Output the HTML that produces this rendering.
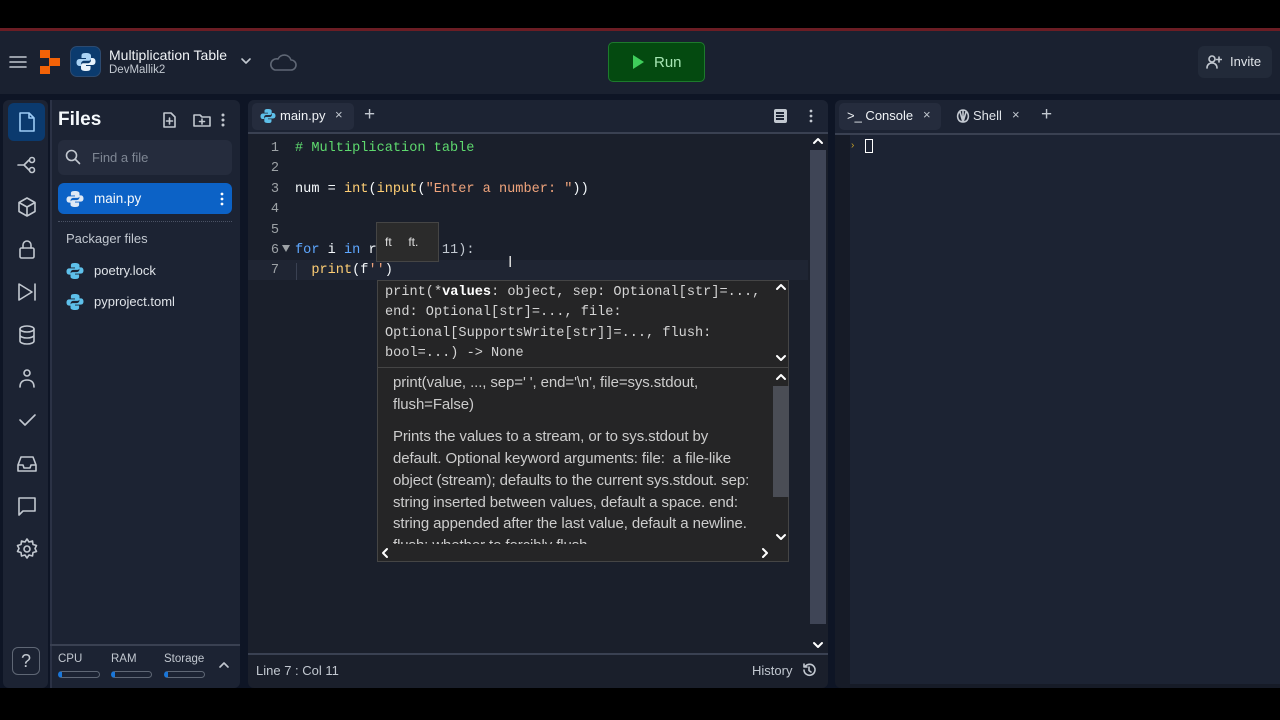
<!DOCTYPE html>
<html><head><meta charset="utf-8"><style>
*{margin:0;padding:0;box-sizing:border-box}
body{width:1280px;height:720px;background:#000;position:relative;overflow:hidden;font-family:"Liberation Sans",sans-serif;color:#f5f9fc}
.a{position:absolute}
.mono{font-family:"Liberation Mono","DejaVu Sans Mono",monospace}
svg{position:absolute;fill:none;stroke:#c2c8d0;stroke-width:1.6;stroke-linecap:round;stroke-linejoin:round}
</style></head><body>
<div class="a" style="left:0;top:0;width:1280px;height:28px;background:#000"></div>
<div class="a" style="left:0;top:28px;width:1280px;height:3px;background:#6b1d24"></div>
<div class="a" style="left:0;top:31px;width:1280px;height:657px;background:#0e1525"></div>
<div class="a" style="left:0;top:31px;width:1280px;height:63px;background:#1a2130"></div>
<!-- header -->
<svg style="left:8px;top:52px" width="20" height="20"><path d="M2 5h16M2 10h16M2 15h16"/></svg>
<div class="a" style="left:40px;top:50px;width:10px;height:8px;background:#f26207"></div>
<div class="a" style="left:49px;top:58px;width:11px;height:8px;background:#f26207"></div>
<div class="a" style="left:40px;top:66px;width:10px;height:8px;background:#f26207"></div>
<div class="a" style="left:70px;top:46px;width:31px;height:31px;border-radius:7px;background:#0b3b6e;border:1px solid #2c4a70"></div>
<svg style="left:76px;top:52px;stroke:none" width="20" height="20"><path fill="#a9d3f5" d="M9.5 1c-4 0-4 1.7-4 3v2h4.5v1H3.5C1.5 7 0.5 8.5 0.5 10.5s1 3.5 3 3.5h1.6v-2.2c0-1.8 1.4-3 3-3h4.5c1.4 0 2.4-1 2.4-2.4V3.8C15 2 13.5 1 9.5 1z"/><path fill="#e8f3fc" d="M10.5 19c4 0 4-1.7 4-3v-2H10v-1h6.5c2 0 3-1.5 3-3.5s-1-3.5-3-3.5h-1.6v2.2c0 1.8-1.4 3-3 3H7.4C6 11.2 5 12.2 5 13.6v2.6C5 18 6.5 19 10.5 19z"/></svg>
<div class="a" style="left:109px;top:47px;font-size:14px;color:#f0f3f6">Multiplication Table</div>
<div class="a" style="left:109px;top:64px;font-size:11.5px;color:#c2c8d0">DevMallik2</div>
<svg style="left:240px;top:56px" width="12" height="10"><path d="M2 3l4 4 4-4"/></svg>
<svg style="left:268px;top:50px;stroke:#5f6775" width="30" height="24"><path d="M7 20h16a5 5 0 0 0 0-10 7 7 0 0 0-13-1 5.5 5.5 0 0 0-3 11z"/></svg>
<div class="a" style="left:608px;top:42px;width:97px;height:40px;border-radius:5px;background:#044a10;border:1px solid #1d7a2c"></div>
<div class="a" style="left:633px;top:55px;width:0;height:0;border-left:11px solid #3fce5b;border-top:7px solid transparent;border-bottom:7px solid transparent"></div>
<div class="a" style="left:654px;top:54px;font-size:15px;color:#a6e6b3">Run</div>
<div class="a" style="left:1198px;top:46px;width:74px;height:32px;border-radius:6px;background:#222a39"></div>
<svg style="left:1206px;top:54px" width="16" height="16"><circle cx="6" cy="5" r="3"/><path d="M1 14c0-3 2-5 5-5s5 2 5 5M13 3v5M10.5 5.5h5"/></svg>
<div class="a" style="left:1230px;top:54px;font-size:13px;color:#dfe3e8">Invite</div>

<!-- left rail -->
<div class="a" style="left:3px;top:100px;width:45px;height:588px;background:#1c2333;border-radius:6px"></div>
<div class="a" style="left:8px;top:103px;width:37px;height:38px;border-radius:6px;background:#0b3a6e"></div>
<svg style="left:16px;top:111px;stroke:#9ccbf5" width="22" height="22"><path d="M4 2h9l5 5v13H4z M13 2v5h5"/></svg>
<svg style="left:16px;top:154px" width="22" height="22"><path d="M2 11h6M8 11l5-5M8 11l5 5"/><circle cx="16" cy="6" r="2.5"/><circle cx="16" cy="16" r="2.5"/></svg>
<svg style="left:16px;top:196px" width="22" height="22"><path d="M11 2l8 4.5v9L11 20l-8-4.5v-9zM3 6.5l8 4.5 8-4.5M11 11v9"/></svg>
<svg style="left:16px;top:238px" width="22" height="22"><rect x="4" y="10" width="14" height="10" rx="1.5"/><path d="M7 10V7a4 4 0 0 1 8 0v3"/></svg>
<svg style="left:16px;top:281px" width="22" height="22"><path d="M3 3l13 8-13 8zM19 3v16"/></svg>
<svg style="left:16px;top:324px" width="22" height="22"><ellipse cx="11" cy="5" rx="7" ry="3"/><path d="M4 5v12c0 1.7 3 3 7 3s7-1.3 7-3V5M4 11c0 1.7 3 3 7 3s7-1.3 7-3"/></svg>
<svg style="left:16px;top:367px" width="22" height="22"><circle cx="11" cy="6" r="3"/><path d="M4 20c0-5 3-7 7-7s7 2 7 7"/></svg>
<svg style="left:16px;top:409px" width="22" height="22"><path d="M4 11l5 5 10-10"/></svg>
<svg style="left:16px;top:452px" width="22" height="22"><path d="M2 13h5l1 3h6l1-3h5M2 13l3-8h12l3 8v6H2z"/></svg>
<svg style="left:16px;top:495px" width="22" height="22"><path d="M3 3h16v13H7l-4 4z"/></svg>
<svg style="left:15px;top:537px" width="24" height="24"><circle cx="12" cy="12" r="3"/><path d="M12 2l2 3 3.5-1 .5 3.5 3.5 1-1.5 3 1.5 3-3.5 1-.5 3.5-3.5-1-2 3-2-3-3.5 1-.5-3.5-3.5-1 1.5-3-1.5-3 3.5-1 .5-3.5 3.5 1z"/></svg>
<div class="a" style="left:12px;top:647px;width:28px;height:28px;border-radius:6px;border:1.5px solid #5f6775;text-align:center;font-size:18px;line-height:26px;color:#c2c8d0">?</div>

<!-- files panel -->
<div class="a" style="left:50px;top:100px;width:190px;height:588px;background:#1c2333;border-left:2px solid #2b3245;border-radius:0 6px 6px 0"></div>
<div class="a" style="left:58px;top:109px;font-size:19px;font-weight:bold;color:#f5f9fc">Files</div>
<svg style="left:162px;top:112px" width="14" height="16"><path d="M2 1h7l4 4v10H2zM7.5 6v6M4.5 9h6"/></svg>
<svg style="left:193px;top:112px" width="18" height="16"><path d="M1 3h6l2 2h8v9H1zM9 7v5M6.5 9.5h5"/></svg>
<svg style="left:216px;top:112px;stroke:none;fill:#c2c8d0" width="14" height="16"><circle cx="7" cy="3" r="1.5"/><circle cx="7" cy="8" r="1.5"/><circle cx="7" cy="13" r="1.5"/></svg>
<div class="a" style="left:58px;top:140px;width:174px;height:35px;border-radius:6px;background:#252c3d"></div>
<svg style="left:65px;top:149px" width="16" height="16"><circle cx="6.5" cy="6.5" r="5"/><path d="M10.5 10.5l4 4"/></svg>
<div class="a" style="left:92px;top:150px;font-size:13px;color:#7f8794">Find a file</div>
<div class="a" style="left:58px;top:183px;width:174px;height:31px;border-radius:6px;background:#0c62c6"></div>
<svg style="left:66px;top:190px;stroke:none" width="18" height="18"><path fill="#dfe9f5" d="M8.5 1c-3.6 0-3.6 1.5-3.6 2.7v1.8H9v.9H3.2C1.4 6.4.5 7.7.5 9.5s.9 3.1 2.7 3.1h1.4v-2c0-1.600 1.3-2.7 2.7-2.7h4c1.3 0 2.2-.9 2.2-2.2V3.4C13.5 1.9 12.1 1 8.5 1zM9.5 17c3.6 0 3.6-1.5 3.6-2.7v-1.8H9v-.9h5.8c1.8 0 2.7-1.3 2.7-3.1s-.9-3.1-2.7-3.1h-1.4v2c0 1.6-1.3 2.7-2.7 2.7h-4c-1.3 0-2.2.9-2.2 2.2v2.3C4.5 16.1 5.9 17 9.5 17z"/></svg>
<div class="a" style="left:94px;top:191px;font-size:13.5px;color:#f5f9fc">main.py</div>
<svg style="left:215px;top:190px;stroke:none;fill:#fff" width="14" height="18"><circle cx="7" cy="4" r="1.4"/><circle cx="7" cy="9" r="1.4"/><circle cx="7" cy="14" r="1.4"/></svg>
<div class="a" style="left:58px;top:221px;width:174px;border-top:1px dotted #4a5264"></div>
<div class="a" style="left:66px;top:231px;font-size:13px;color:#c2c8d0">Packager files</div>
<svg style="left:66px;top:262px;stroke:none" width="18" height="18"><path fill="#5ec0ea" d="M8.5 1c-3.6 0-3.6 1.5-3.6 2.7v1.8H9v.9H3.2C1.4 6.4.5 7.7.5 9.5s.9 3.1 2.7 3.1h1.4v-2c0-1.6 1.3-2.7 2.7-2.7h4c1.3 0 2.2-.9 2.2-2.2V3.4C13.5 1.9 12.1 1 8.5 1zM9.5 17c3.6 0 3.6-1.5 3.6-2.7v-1.8H9v-.9h5.8c1.8 0 2.7-1.3 2.7-3.1s-.9-3.1-2.7-3.1h-1.4v2c0 1.6-1.3 2.7-2.7 2.7h-4c-1.3 0-2.2.9-2.2 2.2v2.3C4.5 16.1 5.9 17 9.5 17z"/></svg>
<div class="a" style="left:94px;top:263px;font-size:13px;color:#dfe3e8">poetry.lock</div>
<svg style="left:66px;top:293px;stroke:none" width="18" height="18"><path fill="#5ec0ea" d="M8.5 1c-3.6 0-3.6 1.5-3.6 2.7v1.8H9v.9H3.2C1.4 6.4.5 7.7.5 9.5s.9 3.1 2.7 3.1h1.4v-2c0-1.6 1.3-2.7 2.7-2.7h4c1.3 0 2.2-.9 2.2-2.2V3.4C13.5 1.9 12.1 1 8.5 1zM9.5 17c3.6 0 3.6-1.5 3.6-2.7v-1.8H9v-.9h5.8c1.8 0 2.7-1.3 2.7-3.1s-.9-3.1-2.7-3.1h-1.4v2c0 1.6-1.3 2.7-2.7 2.7h-4c-1.3 0-2.2.9-2.2 2.2v2.3C4.5 16.1 5.9 17 9.5 17z"/></svg>
<div class="a" style="left:94px;top:294px;font-size:13px;color:#dfe3e8">pyproject.toml</div>
<div class="a" style="left:50px;top:644px;width:190px;height:2px;background:#3a4152"></div>
<div class="a" style="left:58px;top:653px;font-size:11.5px;color:#c2c8d0">CPU</div>
<div class="a" style="left:111px;top:653px;font-size:11.5px;color:#c2c8d0">RAM</div>
<div class="a" style="left:164px;top:653px;font-size:11.5px;color:#c2c8d0">Storage</div>
<div class="a" style="left:58px;top:671px;width:42px;height:7px;border-radius:4px;border:1px solid #5f6775;border-left:4px solid #1a76d8"></div>
<div class="a" style="left:111px;top:671px;width:41px;height:7px;border-radius:4px;border:1px solid #5f6775;border-left:4px solid #1a76d8"></div>
<div class="a" style="left:164px;top:671px;width:41px;height:7px;border-radius:4px;border:1px solid #5f6775;border-left:4px solid #1a76d8"></div>
<svg style="left:218px;top:660px" width="12" height="10"><path d="M2 7l4-4 4 4"/></svg>

<!-- editor -->
<div class="a" style="left:248px;top:100px;width:580px;height:588px;background:#1a1f2b;border-radius:6px"></div>
<div class="a" style="left:248px;top:100px;width:580px;height:32px;background:#1c2333;border-radius:6px 6px 0 0"></div>
<div class="a" style="left:252px;top:103px;width:102px;height:27px;border-radius:5px;background:#252c3d"></div>
<svg style="left:260px;top:108px;stroke:none" width="16" height="16"><path fill="#5ec0ea" d="M7.5 1c-3 0-3 1.3-3 2.3v1.5H8v.7H3C1.4 5.5.5 6.6.5 8.2S1.3 11 2.9 11h1.2V9.3c0-1.4 1.1-2.3 2.3-2.3h3.4c1.1 0 1.9-.8 1.9-1.9V3C11.7 1.7 10.5 1 7.5 1zM8.5 15c3 0 3-1.3 3-2.3v-1.5H8v-.7h5c1.6 0 2.5-1.1 2.5-2.7S14.7 5 13.1 5h-1.2v1.7c0 1.4-1.1 2.3-2.3 2.3H6.2c-1.1 0-1.9.8-1.9 1.9V13c0 1.3 1.2 2 4.2 2z"/></svg>
<div class="a" style="left:280px;top:108px;font-size:13px;color:#f0f3f6">main.py</div>
<div class="a" style="left:335px;top:107px;font-size:13px;color:#c2c8d0">×</div>
<div class="a" style="left:364px;top:104px;font-size:19px;color:#c2c8d0">+</div>
<div class="a" style="left:774px;top:109px;width:13px;height:14px;background:#c2c8d0;border-radius:2px"></div>
<div class="a" style="left:776px;top:112px;width:8px;height:2px;background:#1c2333;box-shadow:0 3px 0 #1c2333,0 6px 0 #1c2333"></div>
<svg style="left:805px;top:108px;stroke:none;fill:#c2c8d0" width="12" height="16"><circle cx="6" cy="3" r="1.4"/><circle cx="6" cy="8" r="1.4"/><circle cx="6" cy="13" r="1.4"/></svg>
<div class="a" style="left:248px;top:132px;width:580px;height:2px;background:#3a4152"></div>
<div class="a" style="left:248px;top:260px;width:560px;height:20px;background:#1f2533"></div>
<div class="a mono" style="left:255px;top:139px;font-size:13.6px;line-height:20.4px;color:#9da2a6;text-align:right;width:24px">1<br>2<br>3<br>4<br>5<br>6<br>7</div>
<div class="a" style="left:282px;top:245px;width:0;height:0;border-top:7px solid #9da2a6;border-left:4px solid transparent;border-right:4px solid transparent"></div>
<div class="a" style="left:296px;top:263px;width:1px;height:17px;background:#3a4152"></div>
<div class="a mono" style="left:295px;top:139px;font-size:13.6px;line-height:20.4px;color:#f5f9fc;white-space:pre"><span style="color:#5ed96e"># Multiplication table</span>

num = <span style="color:#ffcf75">int</span>(<span style="color:#ffcf75">input</span>(<span style="color:#f0a47c">"Enter a number: "</span>))


<span style="color:#5ea7ff">for</span> i <span style="color:#5ea7ff">in</span> r        <span style="color:#c2c8d0">11):</span>
  <span style="color:#ffcf75">print</span>(f<span style="color:#f0a47c">''</span>)</div>
<div class="a" style="left:376px;top:222px;width:63px;height:40px;background:#2b2b2b;border:1px solid #454545"></div>
<div class="a" style="left:385px;top:235px;font-size:12px;color:#e0e0e0">ft&nbsp;&nbsp;&nbsp;&nbsp;&nbsp;ft.</div>
<div class="a" style="left:508px;top:254px;font-size:16px;color:#ddd">I</div>
<!-- hover popup -->
<div class="a" style="left:377px;top:280px;width:412px;height:282px;background:#252526;border:1px solid #454545"></div>
<div class="a mono" style="left:385px;top:283px;font-size:13.6px;line-height:20.4px;color:#d4d4d4;white-space:pre">print(*<b style="color:#fff">values</b>: object, sep: Optional[str]=...,
end: Optional[str]=..., file:
Optional[SupportsWrite[str]]=..., flush:
bool=...) -&gt; None</div>
<div class="a" style="left:377px;top:367px;width:412px;height:1px;background:#454545"></div>
<svg style="left:775px;top:282px;stroke:#fff;stroke-width:2" width="12" height="10"><path d="M2 7l4-4 4 4"/></svg>
<div class="a" style="left:393px;top:372px;width:366px;height:172px;overflow:hidden;font-size:15px;line-height:21.7px;color:#cccccc;letter-spacing:-0.1px">print(value, ..., sep=' ', end='\n', file=sys.stdout, flush=False)<div style="height:11px"></div>Prints the values to a stream, or to sys.stdout by default. Optional keyword arguments: file:&nbsp; a file-like object (stream); defaults to the current sys.stdout. sep:&nbsp;&nbsp; string inserted between values, default a space. end:&nbsp;&nbsp; string appended after the last value, default a newline. flush: whether to forcibly flush</div>
<div class="a" style="left:773px;top:386px;width:16px;height:111px;background:#4a4d55"></div>
<svg style="left:775px;top:353px;stroke:#fff;stroke-width:2" width="12" height="10"><path d="M2 3l4 4 4-4"/></svg>
<svg style="left:775px;top:372px;stroke:#fff;stroke-width:2" width="12" height="10"><path d="M2 7l4-4 4 4"/></svg>
<svg style="left:775px;top:532px;stroke:#fff;stroke-width:2" width="12" height="10"><path d="M2 3l4 4 4-4"/></svg>
<svg style="left:380px;top:547px;stroke:#fff;stroke-width:2" width="10" height="12"><path d="M7 2L3 6l4 4"/></svg>
<svg style="left:760px;top:547px;stroke:#fff;stroke-width:2" width="10" height="12"><path d="M3 2l4 4-4 4"/></svg>
<!-- editor scrollbar -->
<div class="a" style="left:810px;top:150px;width:16px;height:474px;background:#3f4556"></div>
<svg style="left:812px;top:136px;stroke:#fff;stroke-width:2" width="12" height="10"><path d="M2 7l4-4 4 4"/></svg>
<svg style="left:812px;top:640px;stroke:#fff;stroke-width:2" width="12" height="10"><path d="M2 3l4 4 4-4"/></svg>
<div class="a" style="left:248px;top:653px;width:580px;height:2px;background:#3a4152"></div>
<div class="a" style="left:256px;top:663px;font-size:13px;color:#c2c8d0">Line 7 : Col 11</div>
<div class="a" style="left:752px;top:663px;font-size:13px;color:#c2c8d0">History</div>
<svg style="left:801px;top:662px" width="16" height="16"><path d="M3 8a5.5 5.5 0 1 0 1.5-4M3 2v3h3M8 5v3.5l2 1.5"/></svg>

<!-- console -->
<div class="a" style="left:835px;top:100px;width:445px;height:588px;background:#161b27;border-radius:6px 0 0 6px"></div>
<div class="a" style="left:835px;top:100px;width:445px;height:33px;background:#1c2333;border-radius:6px 0 0 0"></div>
<div class="a" style="left:839px;top:103px;width:102px;height:27px;border-radius:5px;background:#252c3d"></div>
<div class="a" style="left:847px;top:108px;font-size:13px;color:#f0f3f6">&gt;_ Console</div>
<div class="a" style="left:923px;top:107px;font-size:13px;color:#c2c8d0">×</div>
<svg style="left:955px;top:108px" width="16" height="16"><path d="M8 14C3 14 2 9 3 6s3-4 5-4 4 1 5 4 0 8-5 8zM8 14V3M8 14L5 4M8 14l3-10"/></svg>
<div class="a" style="left:973px;top:108px;font-size:13px;color:#dfe3e8">Shell</div>
<div class="a" style="left:1012px;top:107px;font-size:13px;color:#c2c8d0">×</div>
<div class="a" style="left:1041px;top:104px;font-size:19px;color:#c2c8d0">+</div>
<div class="a" style="left:835px;top:133px;width:445px;height:2px;background:#3a4152"></div>
<div class="a" style="left:850px;top:135px;width:430px;height:549px;background:#1c2333"></div>
<div class="a" style="left:851px;top:140px;font-size:10px;color:#c9a227">›</div>
<div class="a" style="left:865px;top:139px;width:8px;height:14px;border:1.5px solid #fff"></div>
<div class="a" style="left:0;top:688px;width:1280px;height:32px;background:#000"></div>
</body></html>
